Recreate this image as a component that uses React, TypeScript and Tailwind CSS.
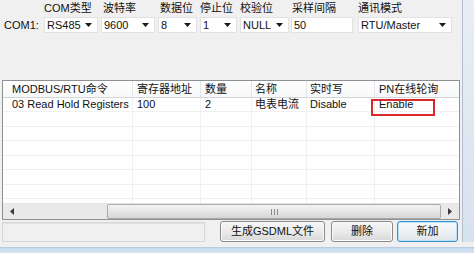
import React from "react";

const Arrow = () => (
  <svg width="7" height="4" viewBox="0 0 7 4" className="shrink-0">
    <path d="M0 0H7L3.5 4Z" fill="#1a1a1a" />
  </svg>
);

function Field({ label, value, w, select = true, labelPl = "pl-0" }: { label: string; value: string; w: string; select?: boolean; labelPl?: string }) {
  return (
    <div className={`flex flex-col ${w}`}>
      <div className={`h-[17px] flex items-center whitespace-nowrap ${labelPl}`}>{label}</div>
      <div className="h-[16px] bg-white border border-[#e2e2e2] flex items-center justify-between pl-[2px] pr-[5px]">
        <span className="leading-none">{value}</span>
        {select && <Arrow />}
      </div>
    </div>
  );
}

const cols = [
  { t: "MODBUS/RTU命令", w: "w-[129px]", pl: "pl-[9px]" },
  { t: "寄存器地址", w: "w-[68px]", pl: "pl-[4px]" },
  { t: "数量", w: "w-[51px]", pl: "pl-[4px]" },
  { t: "名称", w: "w-[55px]", pl: "pl-[3px]" },
  { t: "实时写", w: "w-[68px]", pl: "pl-[3px]" },
  { t: "PN在线轮询", w: "w-[85px]", pl: "pl-[4px]" },
];

const row1 = ["03 Read Hold Registers", "100", "2", "电表电流", "Disable", "Enable"];
const rowHeights = ["h-[14px]", "h-[15px]", "h-[14px]", "h-[15px]", "h-[14px]", "h-[15px]", "h-[14px]", "h-[15px]"];

function Btn({ children, w, focus = false }: { children: React.ReactNode; w: string; focus?: boolean }) {
  return (
    <div
      className={`${w} h-[21px] rounded-[3px] border flex items-center justify-center ${
        focus
          ? "border-[#3c8fc6] bg-gradient-to-b from-[#f6f9fb] via-[#eef2f5] to-[#dfe5ea] shadow-[inset_0_0_0_1px_#b9e1f7]"
          : "border-[#8a8a8a] bg-gradient-to-b from-[#f5f5f5] via-[#ebebeb] to-[#d8d8d8] shadow-[inset_0_0_0_1px_#fbfbfb]"
      }`}
    >
      {children}
    </div>
  );
}

export default function App() {
  return (
    <div className="w-[474px] h-[253px] flex flex-col bg-[#f0f0f0] text-[11px] text-[#111] font-['Liberation_Sans','Noto_Sans_CJK_SC',sans-serif] overflow-hidden">
      <div className="flex flex-1 min-h-0">
        <div className="w-[462px] flex flex-col">
          {/* settings */}
          <div className="h-[80px] flex">
            <div className="w-[44px] flex flex-col">
              <div className="h-[17px]" />
              <div className="h-[16px] flex items-center pl-[4px]">COM1:</div>
            </div>
            <Field label="COM类型" value="RS485" w="w-[54px]" />
            <div className="w-[3px]" />
            <Field label="波特率" value="9600" w="w-[54px]" labelPl="pl-[2px]" />
            <div className="w-[3px]" />
            <Field label="数据位" value="8" w="w-[39px]" labelPl="pl-[2px]" />
            <div className="w-[3px]" />
            <Field label="停止位" value="1" w="w-[37px]" />
            <div className="w-[3px]" />
            <Field label="校验位" value="NULL" w="w-[49px]" />
            <div className="w-[2px]" />
            <Field label="采样间隔" value="50" w="w-[62px]" select={false} labelPl="pl-[1px]" />
            <div className="w-[5px]" />
            <Field label="通讯模式" value="RTU/Master" w="w-[94px]" />
          </div>

          {/* table */}
          <div className="ml-[2px] w-[458px] h-[140px] border border-[#8d9196] bg-white flex flex-col">
            <div className="h-[17px] flex border-b border-[#d5d5d5] bg-gradient-to-b from-white to-[#f7f8f9]">
              {cols.map((c, i) => (
                <div
                  key={i}
                  className={`${c.w} ${c.pl} h-full flex items-center whitespace-nowrap ${i > 0 ? "border-l border-[#e3e5e8]" : ""}`}
                >
                  {c.t}
                </div>
              ))}
            </div>
            <div className="h-[105px] overflow-hidden flex flex-col">
              {rowHeights.map((h, r) => (
                <div key={r} className={`${h} shrink-0 flex border-b border-[#f0f0f0]`}>
                  {cols.map((c, i) => (
                    <div
                      key={i}
                      className={`${c.w} ${c.pl} h-full flex items-center whitespace-nowrap relative ${i > 0 ? "border-l border-[#f0f0f0]" : ""}`}
                    >
                      {r === 0 ? row1[i] : ""}
                      {r === 0 && i === 5 && (
                        <div className="absolute left-[-4px] top-[1px] w-[64px] h-[17px] border-2 border-[#d8282e] z-10" />
                      )}
                    </div>
                  ))}
                </div>
              ))}
            </div>
            {/* horizontal scrollbar */}
            <div className="h-[16px] flex bg-[#e9e9e9] border-t border-[#e4e4e4]">
              <div className="w-[17px] flex items-center justify-center">
                <svg width="4" height="7" viewBox="0 0 4 7">
                  <path d="M4 0V7L0 3.5Z" fill="#3a3a3a" />
                </svg>
              </div>
              <div className="w-[87px]" />
              <div className="w-[334px] h-full rounded-[2px] border border-[#a9a9a9] bg-gradient-to-b from-[#f4f4f4] via-[#e6e6e6] to-[#d6d6d6] flex items-center justify-center gap-[2px]">
                <div className="w-[1px] h-[6px] bg-[#8a8a8a]" />
                <div className="w-[1px] h-[6px] bg-[#8a8a8a]" />
                <div className="w-[1px] h-[6px] bg-[#8a8a8a]" />
              </div>
              <div className="flex-1 flex items-center justify-center">
                <svg width="4" height="7" viewBox="0 0 4 7">
                  <path d="M0 0V7L4 3.5Z" fill="#3a3a3a" />
                </svg>
              </div>
            </div>
          </div>

          {/* bottom */}
          <div className="mt-[1px] h-[21px] flex items-center">
            <div className="ml-[2px] w-[203px] h-[20px] mt-[1px] border border-[#d6d6d6] bg-[#f0f0f0] shadow-[inset_0_1px_0_#e2e2e2]" />
            <div className="w-[15px]" />
            <Btn w="w-[105px]">生成GSDML文件</Btn>
            <div className="w-[6px]" />
            <Btn w="w-[62px]">删除</Btn>
            <div className="w-[4px]" />
            <Btn w="w-[61px]" focus>
              新加
            </Btn>
          </div>
        </div>
        <div className="flex-1 border-l border-[#b4bfcb] bg-gradient-to-b from-[#e9eef4] to-[#d6e2ee]" />
      </div>
      <div className="h-[6px] mt-[5px] bg-gradient-to-b from-[#c6d9ee] to-[#d7e5f3] border-t border-[#b8cbe0]" />
    </div>
  );
}
